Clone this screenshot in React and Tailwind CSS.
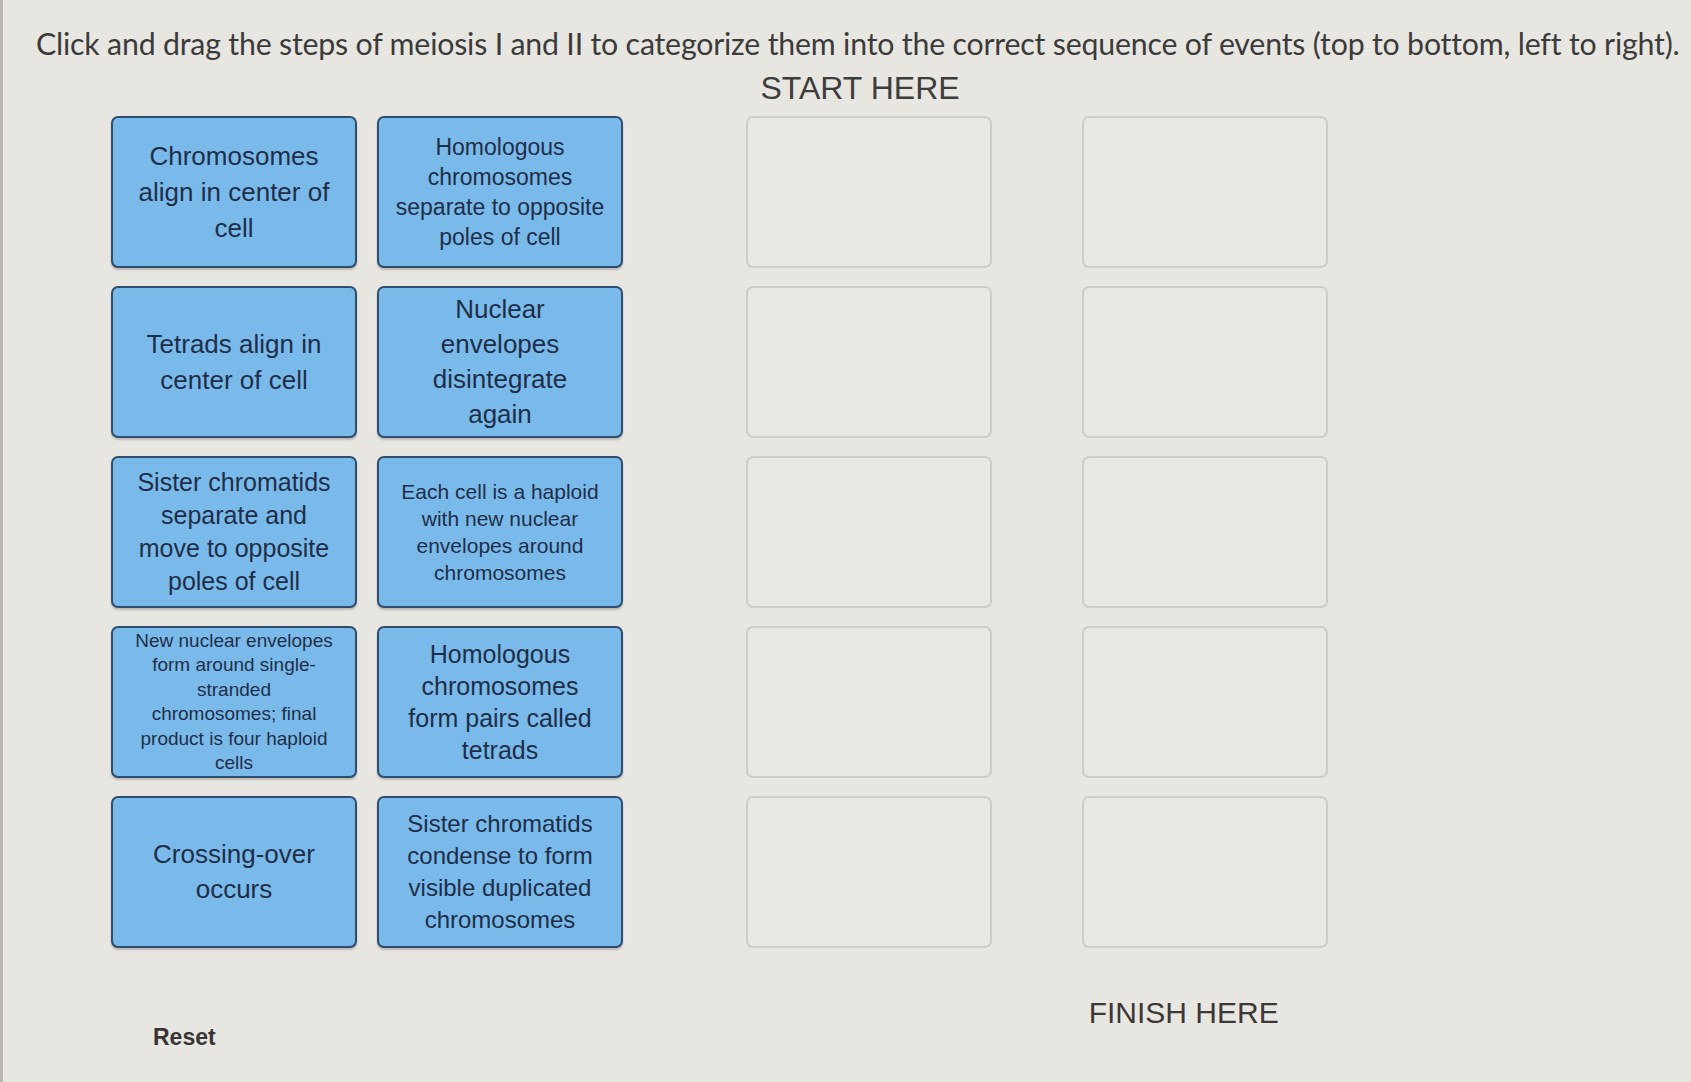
import React from "react";

const cards = [
  { t: ["Chromosomes", "align in center of", "cell"], s: "text-[26px] leading-[36px]" },
  { t: ["Homologous", "chromosomes", "separate to opposite", "poles of cell"], s: "text-[23px] leading-[30px]" },
  { t: ["Tetrads align in", "center of cell"], s: "text-[26px] leading-[36px]" },
  { t: ["Nuclear", "envelopes", "disintegrate", "again"], s: "text-[26px] leading-[35px]" },
  { t: ["Sister chromatids", "separate and", "move to opposite", "poles of cell"], s: "text-[25px] leading-[33px]" },
  { t: ["Each cell is a haploid", "with new nuclear", "envelopes around", "chromosomes"], s: "text-[21px] leading-[27px]" },
  { t: ["New nuclear envelopes", "form around single-", "stranded", "chromosomes; final", "product is four haploid", "cells"], s: "text-[19px] leading-[24.5px]" },
  { t: ["Homologous", "chromosomes", "form pairs called", "tetrads"], s: "text-[25px] leading-[32px]" },
  { t: ["Crossing-over", "occurs"], s: "text-[26px] leading-[35px]" },
  { t: ["Sister chromatids", "condense to form", "visible duplicated", "chromosomes"], s: "text-[24px] leading-[32px]" },
];

export default function App() {
  return (
    <div
      className="relative w-full h-[1082px] overflow-hidden bg-[#e8e6e1] border-l-[3px] border-[#b9b6af]"
      style={{ fontFamily: '"Liberation Sans", Arial, sans-serif' }}
    >
      <div
        className="pt-[23px] pl-[33px] text-[30.3px] leading-[40px] text-[#3b3b3b] whitespace-nowrap tracking-[-0.2px]"
        style={{ fontFamily: 'Lato, "Open Sans", sans-serif' }}
      >
        Click and drag the steps of meiosis I and II to categorize them into the correct sequence of events (top to bottom, left to right).
      </div>
      <div className="mt-[5px] pl-[26px] text-center text-[32px] leading-[40px] text-[#3d3d3d]">
        START HERE
      </div>
      <div className="flex mt-[8px]">
        <div className="ml-[108px] grid grid-cols-[246px_246px] gap-x-[20px] gap-y-[18px]">
          {cards.map((c, i) => (
            <div
              key={i}
              className="h-[152px] rounded-[7px] bg-[#7abaea] border-2 border-[#2f4d6e] shadow-[0_2px_2px_rgba(0,0,0,0.2)] flex items-center justify-center text-center px-[6px] text-[#1f2e48]"
            >
              <span className={c.s + " whitespace-nowrap"}>
                {c.t.map((l, j) => (
                  <span key={j} className="block">{l}</span>
                ))}
              </span>
            </div>
          ))}
        </div>
        <div className="ml-[123px] grid grid-cols-[246px_246px] gap-x-[90px] gap-y-[18px]">
          {Array.from({ length: 10 }).map((_, i) => (
            <div key={i} className="h-[152px] rounded-[7px] border-2 border-[#cfccc6] bg-[#e9e7e2]" />
          ))}
        </div>
      </div>
      <div className="flex items-start mt-[42px]">
        <div className="ml-[150px] mt-[30px] text-[23px] font-bold text-[#3a3535]">Reset</div>
        <div className="ml-[873px] text-[30px] text-[#3d3838]">FINISH HERE</div>
      </div>
    </div>
  );
}
